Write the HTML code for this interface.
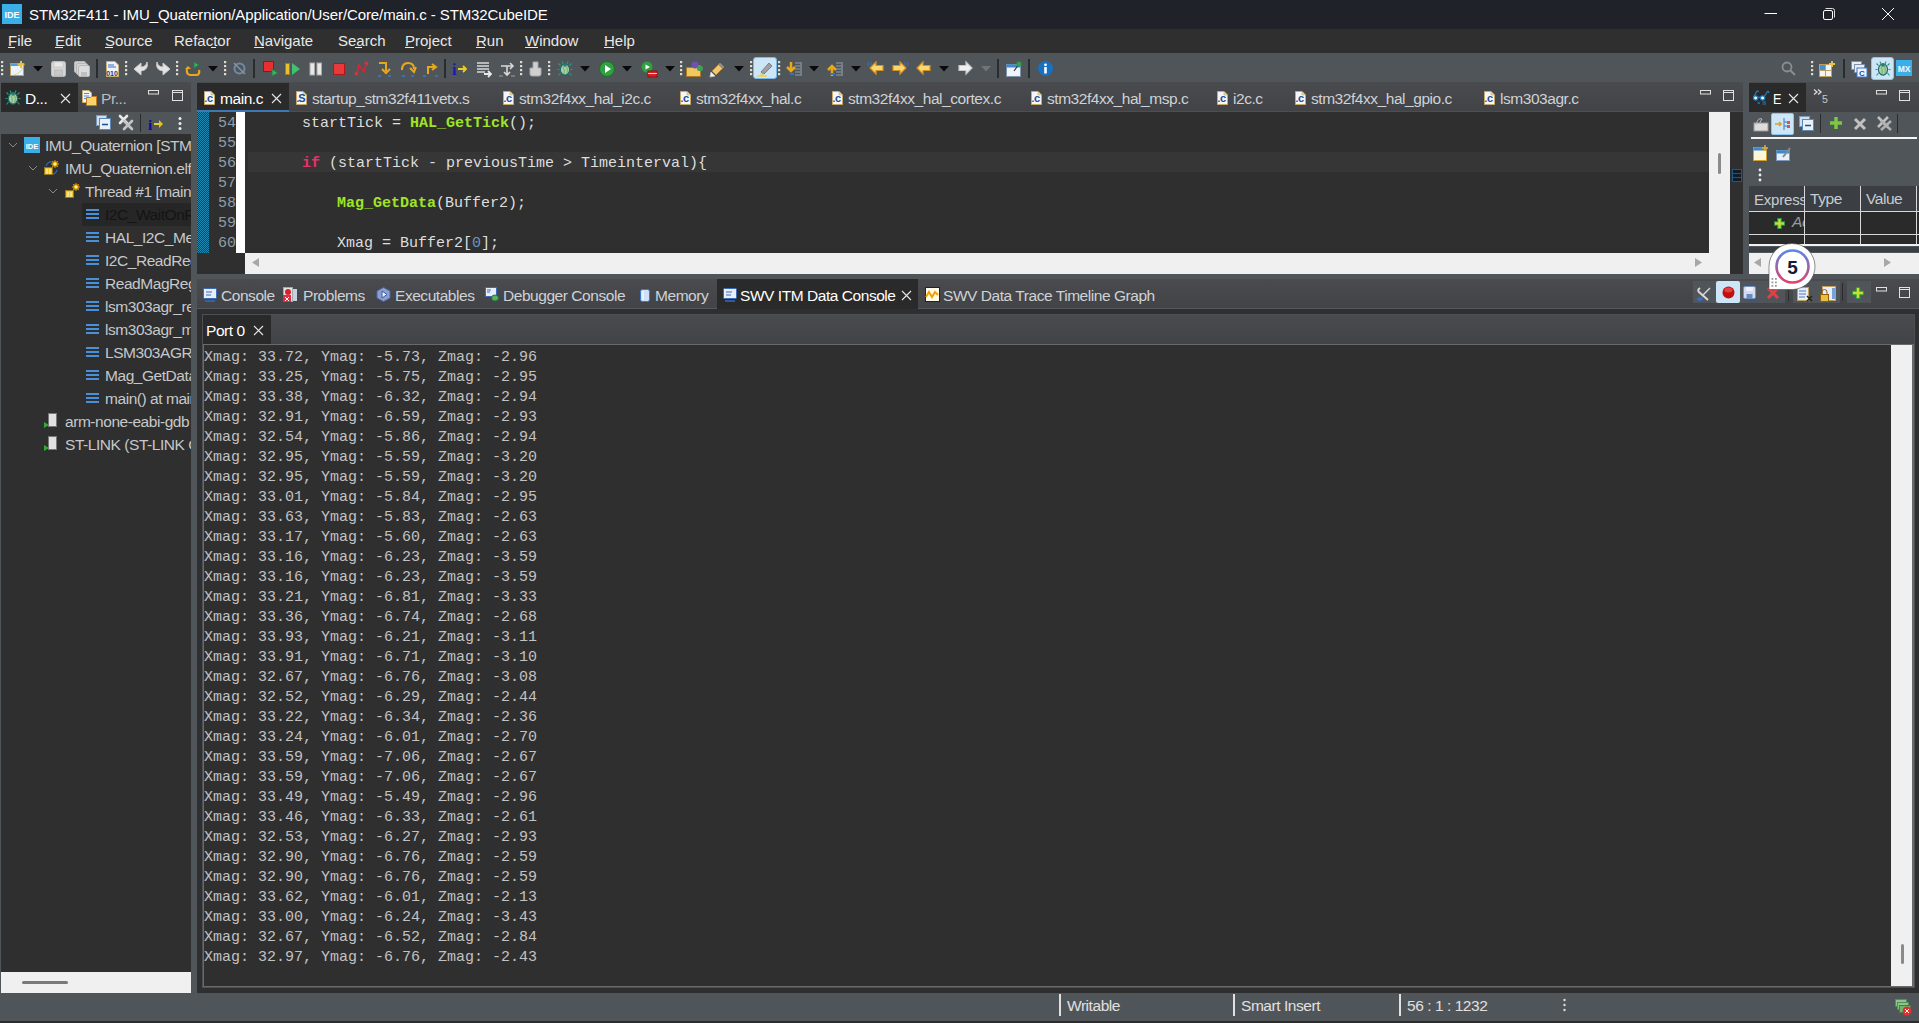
<!DOCTYPE html>
<html><head><meta charset="utf-8">
<style>
*{box-sizing:border-box}
html,body{margin:0;padding:0}
body{width:1919px;height:1023px;overflow:hidden;position:relative;background:#50555a;font-family:"Liberation Sans",sans-serif}
.a{position:absolute}
.t{white-space:pre;line-height:1.15}
svg{overflow:visible}
</style></head><body>
<div class="a" style="left:0px;top:0px;width:1919px;height:29px;background:#1f2229;"></div>
<svg class="a" style="left:2px;top:4px;" width="20" height="20" viewBox="0 0 20 20"><rect width="20" height="20" fill="#3aaee6"/><text x="10" y="14" font-family="Liberation Sans" font-weight="bold" font-size="9" fill="#fff" text-anchor="middle">IDE</text></svg>
<div class="a t" style="left:29px;top:6px;font-size:15px;color:#ffffff;font-family:'Liberation Sans',sans-serif;letter-spacing:-0.1px">STM32F411 - IMU_Quaternion/Application/User/Core/main.c - STM32CubeIDE</div>
<svg class="a" style="left:1764px;top:13px;" width="14" height="2" viewBox="0 0 14 2"><line x1="0.5" y1="0.5" x2="13" y2="0.5" stroke="#fff" stroke-width="1"/></svg>
<svg class="a" style="left:1822px;top:7px;" width="14" height="14" viewBox="0 0 14 14"><rect x="1.5" y="3.5" width="9" height="9" rx="1.5" fill="none" stroke="#fff"/><path d="M3.5 1.5H10.5Q12.5 1.5 12.5 3.5V10.5" fill="none" stroke="#ddd"/></svg>
<svg class="a" style="left:1881px;top:7px;" width="14" height="14" viewBox="0 0 14 14"><path d="M1 1L13 13M13 1L1 13" stroke="#fff" stroke-width="1"/></svg>
<div class="a" style="left:0px;top:29px;width:1919px;height:24px;background:#2f2f2f;"></div>
<div class="a t" style="left:8px;top:32px;font-size:15px;color:#e8e8e8;font-family:'Liberation Sans',sans-serif;">File</div>
<div class="a t" style="left:55px;top:32px;font-size:15px;color:#e8e8e8;font-family:'Liberation Sans',sans-serif;">Edit</div>
<div class="a t" style="left:105px;top:32px;font-size:15px;color:#e8e8e8;font-family:'Liberation Sans',sans-serif;">Source</div>
<div class="a t" style="left:174px;top:32px;font-size:15px;color:#e8e8e8;font-family:'Liberation Sans',sans-serif;">Refactor</div>
<div class="a t" style="left:254px;top:32px;font-size:15px;color:#e8e8e8;font-family:'Liberation Sans',sans-serif;">Navigate</div>
<div class="a t" style="left:338px;top:32px;font-size:15px;color:#e8e8e8;font-family:'Liberation Sans',sans-serif;">Search</div>
<div class="a t" style="left:405px;top:32px;font-size:15px;color:#e8e8e8;font-family:'Liberation Sans',sans-serif;">Project</div>
<div class="a t" style="left:476px;top:32px;font-size:15px;color:#e8e8e8;font-family:'Liberation Sans',sans-serif;">Run</div>
<div class="a t" style="left:525px;top:32px;font-size:15px;color:#e8e8e8;font-family:'Liberation Sans',sans-serif;">Window</div>
<div class="a t" style="left:604px;top:32px;font-size:15px;color:#e8e8e8;font-family:'Liberation Sans',sans-serif;">Help</div>
<div class="a" style="left:8px;top:47px;width:7px;height:1px;background:#e8e8e8;"></div>
<div class="a" style="left:55px;top:47px;width:8px;height:1px;background:#e8e8e8;"></div>
<div class="a" style="left:105px;top:47px;width:8px;height:1px;background:#e8e8e8;"></div>
<div class="a" style="left:211px;top:47px;width:5px;height:1px;background:#e8e8e8;"></div>
<div class="a" style="left:254px;top:47px;width:10px;height:1px;background:#e8e8e8;"></div>
<div class="a" style="left:355px;top:47px;width:7px;height:1px;background:#e8e8e8;"></div>
<div class="a" style="left:405px;top:47px;width:9px;height:1px;background:#e8e8e8;"></div>
<div class="a" style="left:476px;top:47px;width:9px;height:1px;background:#e8e8e8;"></div>
<div class="a" style="left:525px;top:47px;width:13px;height:1px;background:#e8e8e8;"></div>
<div class="a" style="left:604px;top:47px;width:10px;height:1px;background:#e8e8e8;"></div>
<div class="a" style="left:0px;top:53px;width:1919px;height:30px;background:#50555a;"></div>
<svg class="a" style="left:1px;top:61px;" width="3" height="15" viewBox="0 0 3 15"><rect x="0" y="0" width="2.2" height="2.2" fill="#e0dcc8"/><rect x="0" y="4" width="2.2" height="2.2" fill="#e0dcc8"/><rect x="0" y="8" width="2.2" height="2.2" fill="#e0dcc8"/><rect x="0" y="12" width="2.2" height="2.2" fill="#e0dcc8"/></svg>
<svg class="a" style="left:10px;top:61px;" width="15" height="15" viewBox="0 0 15 15"><rect x="0.5" y="2.5" width="13" height="12" fill="#eaf4fc" stroke="#c0a060"/><rect x="0.5" y="2.5" width="9" height="2.5" fill="#4aa0e0"/><path d="M11 0V7M7.5 3.5H14.5" stroke="#f0c040" stroke-width="2"/><path d="M4 14Q11 12 13 6" stroke="#e8d090" fill="none"/></svg>
<svg class="a" style="left:33px;top:66px;" width="10" height="6" viewBox="0 0 10 6"><path d="M0 0H10L5 5.5Z" fill="#0a0a0a"/></svg>
<svg class="a" style="left:51px;top:61px;" width="15" height="16" viewBox="0 0 15 16"><rect x="0.5" y="0.5" width="14" height="15" rx="2" fill="#d6d6d6" stroke="#bdbdbd"/><rect x="3" y="1" width="9" height="5" fill="#e8e8e8" stroke="#c0c0c0" stroke-width="0.6"/><rect x="3.5" y="9" width="8" height="6" fill="#c8c8c8" stroke="#b0b0b0" stroke-width="0.6"/></svg>
<svg class="a" style="left:74px;top:61px;" width="16" height="16" viewBox="0 0 16 16"><rect x="0.5" y="0.5" width="11" height="11" rx="1.5" fill="#d0d0d0" stroke="#b8b8b8"/><rect x="2.5" y="2.5" width="11" height="11" rx="1.5" fill="#d6d6d6" stroke="#b8b8b8"/><rect x="4.5" y="4.5" width="11" height="11" rx="1.5" fill="#dcdcdc" stroke="#b8b8b8"/><rect x="7" y="11" width="6" height="4" fill="#c0c0c0"/></svg>
<div class="a" style="left:96px;top:59px;width:2px;height:19px;background:#2a2c2e;"></div>
<svg class="a" style="left:106px;top:61px;" width="13" height="16" viewBox="0 0 13 16"><path d="M0.5 0.5H9L12.5 4V15.5H0.5Z" fill="#eef2fa" stroke="#c8b070"/><path d="M2 4H8M2 6H10" stroke="#3a70c0"/><text x="6" y="14.5" font-family="Liberation Sans" font-weight="bold" font-size="7" fill="#1a3a80" text-anchor="middle">010</text></svg>
<svg class="a" style="left:125px;top:61px;" width="3" height="15" viewBox="0 0 3 15"><rect x="0" y="0" width="2.2" height="2.2" fill="#e0dcc8"/><rect x="0" y="4" width="2.2" height="2.2" fill="#e0dcc8"/><rect x="0" y="8" width="2.2" height="2.2" fill="#e0dcc8"/><rect x="0" y="12" width="2.2" height="2.2" fill="#e0dcc8"/></svg>
<svg class="a" style="left:133px;top:61px;" width="16" height="16" viewBox="0 0 16 16"><path d="M14 1Q16 9 8 10V14L1 8L8 2V6Q13 6 14 1Z" fill="#e4e4e4" stroke="#c8c8c8"/></svg>
<svg class="a" style="left:155px;top:61px;" width="16" height="16" viewBox="0 0 16 16"><path d="M2 1Q0 9 8 10V14L15 8L8 2V6Q3 6 2 1Z" fill="#e4e4e4" stroke="#c8c8c8"/></svg>
<svg class="a" style="left:176px;top:61px;" width="3" height="15" viewBox="0 0 3 15"><rect x="0" y="0" width="2.2" height="2.2" fill="#e0dcc8"/><rect x="0" y="4" width="2.2" height="2.2" fill="#e0dcc8"/><rect x="0" y="8" width="2.2" height="2.2" fill="#e0dcc8"/><rect x="0" y="12" width="2.2" height="2.2" fill="#e0dcc8"/></svg>
<svg class="a" style="left:185px;top:61px;" width="16" height="16" viewBox="0 0 16 16"><path d="M2 8Q1 13 5 14H12Q15 13 14 9" stroke="#e8a818" stroke-width="2.2" fill="none"/><path d="M0 8L3 5L6 8" fill="#e8a818"/><path d="M9 1L14 4L9 7Z" fill="#40b060" stroke="#208040"/></svg>
<svg class="a" style="left:208px;top:66px;" width="10" height="6" viewBox="0 0 10 6"><path d="M0 0H10L5 5.5Z" fill="#0a0a0a"/></svg>
<svg class="a" style="left:224px;top:61px;" width="3" height="15" viewBox="0 0 3 15"><rect x="0" y="0" width="2.2" height="2.2" fill="#e0dcc8"/><rect x="0" y="4" width="2.2" height="2.2" fill="#e0dcc8"/><rect x="0" y="8" width="2.2" height="2.2" fill="#e0dcc8"/><rect x="0" y="12" width="2.2" height="2.2" fill="#e0dcc8"/></svg>
<svg class="a" style="left:233px;top:62px;" width="13" height="13" viewBox="0 0 13 13"><circle cx="6.5" cy="6.5" r="5" fill="none" stroke="#6a8ab0" stroke-width="2"/><path d="M1 1L12 12" stroke="#909090" stroke-width="1.5"/></svg>
<div class="a" style="left:253px;top:59px;width:2px;height:19px;background:#2a2c2e;"></div>
<svg class="a" style="left:263px;top:61px;" width="16" height="16" viewBox="0 0 16 16"><rect x="0.5" y="0.5" width="10" height="10" fill="#e83030" stroke="#a01010"/><path d="M9 8L15 12L9 15Z" fill="#40b060" stroke="#208040"/></svg>
<svg class="a" style="left:285px;top:62px;" width="16" height="14" viewBox="0 0 16 14"><rect x="0.5" y="1.5" width="4" height="11" fill="#e8c030" stroke="#a08010"/><path d="M7 1L15 7L7 13Z" fill="#40c070"/></svg>
<svg class="a" style="left:310px;top:62px;" width="12" height="14" viewBox="0 0 12 14"><rect x="0" y="1" width="4.5" height="12" fill="#e8e8e8" stroke="#a8a8a8"/><rect x="7" y="1" width="4.5" height="12" fill="#e8e8e8" stroke="#a8a8a8"/></svg>
<svg class="a" style="left:333px;top:63px;" width="12" height="12" viewBox="0 0 12 12"><rect x="0.5" y="0.5" width="11" height="11" fill="#e83a3a" stroke="#b01818"/></svg>
<svg class="a" style="left:354px;top:61px;" width="15" height="15" viewBox="0 0 15 15"><circle cx="2.5" cy="12.5" r="2" fill="#e03030"/><circle cx="12.5" cy="2.5" r="2" fill="#e03030"/><path d="M3 12L5 4L10 11L12 3" stroke="#d02838" stroke-width="1.6" fill="none"/></svg>
<svg class="a" style="left:377px;top:61px;" width="16" height="16" viewBox="0 0 16 16"><path d="M2 2H9V10" stroke="#e8a818" stroke-width="2" fill="none"/><path d="M5 8L9 12L13 8" stroke="#e8a818" stroke-width="2" fill="none"/><path d="M1 15H4M11 15H14" stroke="#3a78d0" stroke-width="1.5"/></svg>
<svg class="a" style="left:400px;top:61px;" width="16" height="16" viewBox="0 0 16 16"><path d="M2 9Q2 2 8 2Q14 2 14 8" stroke="#e8a818" stroke-width="2" fill="none"/><path d="M10 7L14 11L16 6" stroke="#e8a818" stroke-width="2" fill="none"/><path d="M2 15H5M11 15H14" stroke="#3a78d0" stroke-width="1.5"/></svg>
<svg class="a" style="left:423px;top:61px;" width="16" height="16" viewBox="0 0 16 16"><path d="M5 13V6H12" stroke="#e8a818" stroke-width="2" fill="none"/><path d="M9 3L13 6L9 9" stroke="#e8a818" stroke-width="2" fill="none"/><path d="M0 15H3M12 15H15" stroke="#3a78d0" stroke-width="1.5"/></svg>
<div class="a" style="left:444px;top:59px;width:2px;height:19px;background:#2a2c2e;"></div>
<svg class="a" style="left:452px;top:61px;" width="16" height="16" viewBox="0 0 16 16"><text x="0" y="14" font-family="Liberation Serif" font-weight="bold" font-size="16" fill="#1a1ab0">i</text><path d="M6 8H14M11 5L14 8L11 11" stroke="#e8d020" stroke-width="1.8" fill="none"/></svg>
<svg class="a" style="left:476px;top:61px;" width="16" height="16" viewBox="0 0 16 16"><path d="M1 2H13M1 5H13M1 8H13M1 11H9" stroke="#d8d8d8" stroke-width="1.6"/><path d="M8 13H14M12 10L15 13L12 16" stroke="#e8e8e8" stroke-width="1.8" fill="none"/></svg>
<svg class="a" style="left:499px;top:61px;" width="16" height="16" viewBox="0 0 16 16"><path d="M2 5H14M11 2L14 5L11 8" stroke="#d8d8d8" stroke-width="1.6" fill="none"/><path d="M8 5V14M5 11L8 14L11 11" stroke="#d8d8d8" stroke-width="1.6" fill="none"/><path d="M0 15H4M12 15H16" stroke="#a0a0a0"/></svg>
<svg class="a" style="left:520px;top:61px;" width="3" height="15" viewBox="0 0 3 15"><rect x="0" y="0" width="2.2" height="2.2" fill="#e0dcc8"/><rect x="0" y="4" width="2.2" height="2.2" fill="#e0dcc8"/><rect x="0" y="8" width="2.2" height="2.2" fill="#e0dcc8"/><rect x="0" y="12" width="2.2" height="2.2" fill="#e0dcc8"/></svg>
<svg class="a" style="left:528px;top:61px;" width="15" height="16" viewBox="0 0 15 16"><path d="M5 1H10V7H13V13Q13 15 11 15H4Q2 15 2 13V7H5Z" fill="#d0d0d0" stroke="#a8a8a8"/></svg>
<svg class="a" style="left:548px;top:61px;" width="3" height="15" viewBox="0 0 3 15"><rect x="0" y="0" width="2.2" height="2.2" fill="#e0dcc8"/><rect x="0" y="4" width="2.2" height="2.2" fill="#e0dcc8"/><rect x="0" y="8" width="2.2" height="2.2" fill="#e0dcc8"/><rect x="0" y="12" width="2.2" height="2.2" fill="#e0dcc8"/></svg>
<svg class="a" style="left:557px;top:61px;" width="16" height="16" viewBox="0 0 16 16"><path d="M3.5 4.5L1.5 2.5M12.5 4.5L14.5 2.5M2.5 8.5H0.5M13.5 8.5H15.5M3.5 12L1.5 14.5M12.5 12L14.5 14.5M6 3L5 0.5M10 3L11 0.5" stroke="#2a9a80" stroke-width="1.1"/><ellipse cx="8" cy="8.5" rx="4.6" ry="5.6" fill="#a8d0a0" stroke="#1e6a70" stroke-width="1.1"/><path d="M6 5.5Q8 9 7 13M9.5 5Q11 8.5 10 12.5" stroke="#6aa070" fill="none" stroke-width="0.8"/><circle cx="8" cy="4" r="1.8" fill="#2a7a70"/></svg>
<svg class="a" style="left:580px;top:66px;" width="10" height="6" viewBox="0 0 10 6"><path d="M0 0H10L5 5.5Z" fill="#0a0a0a"/></svg>
<svg class="a" style="left:599px;top:61px;" width="16" height="16" viewBox="0 0 16 16"><circle cx="8" cy="8" r="7.5" fill="#30a040" stroke="#1a7028"/><path d="M6 4L12 8L6 12Z" fill="#fff"/></svg>
<svg class="a" style="left:622px;top:66px;" width="10" height="6" viewBox="0 0 10 6"><path d="M0 0H10L5 5.5Z" fill="#0a0a0a"/></svg>
<svg class="a" style="left:641px;top:61px;" width="17" height="17" viewBox="0 0 17 17"><circle cx="6" cy="6" r="5.5" fill="#30a040"/><path d="M4.5 3.5L9 6L4.5 8.5Z" fill="#fff"/><rect x="7" y="10" width="9" height="6" fill="#d82020" stroke="#901010"/><path d="M7 12.5H16" stroke="#fff" stroke-width="0.8"/></svg>
<svg class="a" style="left:665px;top:66px;" width="10" height="6" viewBox="0 0 10 6"><path d="M0 0H10L5 5.5Z" fill="#0a0a0a"/></svg>
<svg class="a" style="left:680px;top:61px;" width="3" height="15" viewBox="0 0 3 15"><rect x="0" y="0" width="2.2" height="2.2" fill="#e0dcc8"/><rect x="0" y="4" width="2.2" height="2.2" fill="#e0dcc8"/><rect x="0" y="8" width="2.2" height="2.2" fill="#e0dcc8"/><rect x="0" y="12" width="2.2" height="2.2" fill="#e0dcc8"/></svg>
<svg class="a" style="left:686px;top:61px;" width="17" height="16" viewBox="0 0 17 16"><path d="M0.5 6.5H6L7.5 4.5H14.5V15.5H0.5Z" fill="#f0c860" stroke="#b07820"/><circle cx="9" cy="4" r="3.5" fill="#7050b0"/><rect x="11" y="5" width="6" height="5" rx="2" fill="#40a050"/></svg>
<svg class="a" style="left:709px;top:61px;" width="17" height="17" viewBox="0 0 17 17"><path d="M3 10L11 2L15 6L7 14Z" fill="#f0c870" stroke="#b08030"/><path d="M2 11L6 15L1 16Z" fill="#f8f8f8" stroke="#c0c0c0"/><path d="M10 3L14 7" stroke="#888" stroke-width="2"/></svg>
<svg class="a" style="left:734px;top:66px;" width="10" height="6" viewBox="0 0 10 6"><path d="M0 0H10L5 5.5Z" fill="#0a0a0a"/></svg>
<svg class="a" style="left:750px;top:61px;" width="3" height="15" viewBox="0 0 3 15"><rect x="0" y="0" width="2.2" height="2.2" fill="#e0dcc8"/><rect x="0" y="4" width="2.2" height="2.2" fill="#e0dcc8"/><rect x="0" y="8" width="2.2" height="2.2" fill="#e0dcc8"/><rect x="0" y="12" width="2.2" height="2.2" fill="#e0dcc8"/></svg>
<div class="a" style="left:753px;top:57px;width:24px;height:22px;background:#cde6f7;border:1px solid #7ab8ea;border-radius:3px"></div>
<svg class="a" style="left:757px;top:61px;" width="16" height="16" viewBox="0 0 16 16"><path d="M4 11L12 2L15 5L7 13Z" fill="#a0a0a0" stroke="#808080"/><path d="M3 12L7 14L4 15Z" fill="#f0d040"/><path d="M0 15H10" stroke="#f0d040" stroke-width="1.5"/></svg>
<svg class="a" style="left:778px;top:61px;" width="3" height="15" viewBox="0 0 3 15"><rect x="0" y="0" width="2.2" height="2.2" fill="#e0dcc8"/><rect x="0" y="4" width="2.2" height="2.2" fill="#e0dcc8"/><rect x="0" y="8" width="2.2" height="2.2" fill="#e0dcc8"/><rect x="0" y="12" width="2.2" height="2.2" fill="#e0dcc8"/></svg>
<svg class="a" style="left:786px;top:61px;" width="16" height="16" viewBox="0 0 16 16"><path d="M5 1V9M1 6L5 10L9 6" stroke="#e8a818" stroke-width="2.5" fill="none"/><path d="M9 2H14M9 5H14M9 8H14M9 11H14M9 14H14" stroke="#90a0b0"/><path d="M15 1V15" stroke="#a0a8b0"/><rect x="4" y="12" width="4" height="2" fill="#3a70c0"/></svg>
<svg class="a" style="left:809px;top:66px;" width="10" height="6" viewBox="0 0 10 6"><path d="M0 0H10L5 5.5Z" fill="#0a0a0a"/></svg>
<svg class="a" style="left:827px;top:61px;" width="16" height="16" viewBox="0 0 16 16"><path d="M5 15V6M1 9L5 5L9 9" stroke="#e8a818" stroke-width="2.5" fill="none"/><path d="M9 2H14M9 5H14M9 8H14M9 11H14M9 14H14" stroke="#90a0b0"/><path d="M15 1V15" stroke="#a0a8b0"/><rect x="4" y="12" width="4" height="2" fill="#3a70c0"/></svg>
<svg class="a" style="left:851px;top:66px;" width="10" height="6" viewBox="0 0 10 6"><path d="M0 0H10L5 5.5Z" fill="#0a0a0a"/></svg>
<svg class="a" style="left:868px;top:61px;" width="17" height="15" viewBox="0 0 17 15"><path d="M2 7L8 1V4.5H15V9.5H8V13Z" fill="#f8d870" stroke="#d89020" stroke-width="1.2"/><path d="M0 1V5M3 1V5" stroke="#3a70c0"/></svg>
<svg class="a" style="left:891px;top:61px;" width="17" height="15" viewBox="0 0 17 15"><path d="M15 7L9 1V4.5H2V9.5H9V13Z" fill="#f8d870" stroke="#d89020" stroke-width="1.2"/><path d="M14 1V5M17 1V5" stroke="#3a70c0"/></svg>
<svg class="a" style="left:916px;top:61px;" width="15" height="15" viewBox="0 0 15 15"><path d="M1 7L7 1V4.5H14V9.5H7V13Z" fill="#f8d870" stroke="#d89020" stroke-width="1.2"/></svg>
<svg class="a" style="left:939px;top:66px;" width="10" height="6" viewBox="0 0 10 6"><path d="M0 0H10L5 5.5Z" fill="#0a0a0a"/></svg>
<svg class="a" style="left:958px;top:61px;" width="15" height="15" viewBox="0 0 15 15"><path d="M14 7L8 1V4.5H1V9.5H8V13Z" fill="#f0f0f0" stroke="#c8c8c8" stroke-width="1.2"/></svg>
<svg class="a" style="left:981px;top:66px;" width="10" height="6" viewBox="0 0 10 6"><path d="M0 0H10L5 5.5Z" fill="#707478"/></svg>
<div class="a" style="left:997px;top:59px;width:2px;height:19px;background:#2a2c2e;"></div>
<svg class="a" style="left:1006px;top:61px;" width="16" height="16" viewBox="0 0 16 16"><rect x="0.5" y="3.5" width="14" height="12" fill="#eef4fc" stroke="#8090a8"/><rect x="0.5" y="3.5" width="14" height="3" fill="#3a8ad0"/><path d="M8 10L13 3" stroke="#404040" stroke-width="1.2"/><circle cx="13" cy="3" r="2.5" fill="#30a040"/></svg>
<div class="a" style="left:1028px;top:59px;width:2px;height:19px;background:#2a2c2e;"></div>
<svg class="a" style="left:1038px;top:61px;" width="15" height="15" viewBox="0 0 15 15"><circle cx="7.5" cy="7.5" r="7.5" fill="#1a70c0"/><rect x="6.2" y="6" width="2.6" height="6.5" fill="#fff"/><circle cx="7.5" cy="3.8" r="1.4" fill="#fff"/></svg>
<svg class="a" style="left:1781px;top:61px;" width="15" height="15" viewBox="0 0 15 15"><circle cx="6" cy="6" r="4.5" fill="none" stroke="#8a8e92" stroke-width="1.8"/><path d="M9.5 9.5L14 14" stroke="#8a8e92" stroke-width="2"/></svg>
<svg class="a" style="left:1811px;top:61px;" width="3" height="15" viewBox="0 0 3 15"><rect x="0" y="0" width="2.2" height="2.2" fill="#e0dcc8"/><rect x="0" y="4" width="2.2" height="2.2" fill="#e0dcc8"/><rect x="0" y="8" width="2.2" height="2.2" fill="#e0dcc8"/><rect x="0" y="12" width="2.2" height="2.2" fill="#e0dcc8"/></svg>
<svg class="a" style="left:1819px;top:61px;" width="16" height="16" viewBox="0 0 16 16"><rect x="0.5" y="3.5" width="12" height="12" fill="#f0f4f8" stroke="#c0a060"/><path d="M0.5 9.5H12.5M6.5 3.5V15.5" stroke="#c0a060"/><rect x="1" y="4" width="5" height="5" fill="#4a90d0"/><path d="M13 0V6M10 3H16" stroke="#f0c040" stroke-width="1.8"/></svg>
<div class="a" style="left:1843px;top:59px;width:2px;height:19px;background:#2a2c2e;"></div>
<svg class="a" style="left:1851px;top:61px;" width="16" height="16" viewBox="0 0 16 16"><rect x="0.5" y="0.5" width="10" height="8" fill="#e8eef8" stroke="#8090a8"/><rect x="3.5" y="3.5" width="10" height="8" fill="#e8eef8" stroke="#8090a8"/><rect x="6" y="7" width="10" height="9" fill="#f0f4fc" stroke="#3a78d0"/><text x="11" y="15" font-family="Liberation Sans" font-weight="bold" font-size="8" fill="#1a50a0" text-anchor="middle">C</text></svg>
<div class="a" style="left:1871px;top:57px;width:23px;height:23px;background:#cde6f7;border:1px solid #8fc3ea;border-radius:3px"></div>
<svg class="a" style="left:1875px;top:61px;" width="16" height="16" viewBox="0 0 16 16"><path d="M3.5 4.5L1.5 2.5M12.5 4.5L14.5 2.5M2.5 8.5H0.5M13.5 8.5H15.5M3.5 12L1.5 14.5M12.5 12L14.5 14.5M6 3L5 0.5M10 3L11 0.5" stroke="#2a9a80" stroke-width="1.1"/><ellipse cx="8" cy="8.5" rx="4.6" ry="5.6" fill="#a8d0a0" stroke="#1e6a70" stroke-width="1.1"/><path d="M6 5.5Q8 9 7 13M9.5 5Q11 8.5 10 12.5" stroke="#6aa070" fill="none" stroke-width="0.8"/><circle cx="8" cy="4" r="1.8" fill="#2a7a70"/></svg>
<svg class="a" style="left:1896px;top:60px;" width="16" height="16" viewBox="0 0 16 16"><rect width="16" height="16" fill="#3aaee6"/><text x="8" y="12" font-family="Liberation Sans" font-weight="bold" font-size="8.5" fill="#f4faff" text-anchor="middle">MX</text></svg>
<div class="a" style="left:1px;top:82px;width:190px;height:911px;overflow:hidden;background:#2f2f2f;">
<div class="a" style="left:0px;top:0px;width:190px;height:30px;background:linear-gradient(#494b4f,#414347);"></div>
<div class="a" style="left:0px;top:1px;width:77px;height:29px;background:#2a2a2a;"></div>
<svg class="a" style="left:4px;top:8px;" width="16" height="16" viewBox="0 0 16 16"><path d="M3.5 4.5L1.5 2.5M12.5 4.5L14.5 2.5M2.5 8.5H0.5M13.5 8.5H15.5M3.5 12L1.5 14.5M12.5 12L14.5 14.5M6 3L5 0.5M10 3L11 0.5" stroke="#2a9a80" stroke-width="1.1"/><ellipse cx="8" cy="8.5" rx="4.6" ry="5.6" fill="#a8d0a0" stroke="#1e6a70" stroke-width="1.1"/><path d="M6 5.5Q8 9 7 13M9.5 5Q11 8.5 10 12.5" stroke="#6aa070" fill="none" stroke-width="0.8"/><circle cx="8" cy="4" r="1.8" fill="#2a7a70"/></svg>
<div class="a t" style="left:24px;top:8px;font-size:15.5px;color:#ffffff;font-family:'Liberation Sans',sans-serif;letter-spacing:-0.45px;">D...</div>
<svg class="a" style="left:59px;top:11px;" width="11" height="11" viewBox="0 0 11 11"><path d="M1 1L10 10M10 1L1 10" stroke="#e8e8e8" stroke-width="1.1"/></svg>
<svg class="a" style="left:81px;top:8px;" width="16" height="16" viewBox="0 0 16 16"><path d="M0.5 0.5H7L9.5 3V12.5H0.5Z" fill="#eef2fa" stroke="#c8b070"/><path d="M2 3.5H7M2 6H7M2 8.5H6" stroke="#4a7ad8" stroke-width="0.9"/><path d="M4.5 7.5H8.5L9.5 6.5H14.5V15.5H4.5Z" fill="#fad468" stroke="#c47a20"/></svg>
<div class="a t" style="left:100px;top:8px;font-size:15.5px;color:#b9bcc0;font-family:'Liberation Sans',sans-serif;letter-spacing:-0.45px;">Pr...</div>
<svg class="a" style="left:147px;top:8px;" width="11" height="5" viewBox="0 0 11 5"><rect x="0.5" y="0.5" width="10" height="3.5" fill="none" stroke="#e0e0e0"/></svg>
<svg class="a" style="left:171px;top:8px;" width="11" height="11" viewBox="0 0 11 11"><rect x="0.5" y="0.5" width="10" height="10" fill="none" stroke="#e0e0e0"/><line x1="0.5" y1="2.5" x2="10.5" y2="2.5" stroke="#e0e0e0"/></svg>
<div class="a" style="left:0px;top:30px;width:190px;height:22px;background:#50555a;"></div>
<svg class="a" style="left:95px;top:33px;" width="15" height="15" viewBox="0 0 15 15"><rect x="0.5" y="0.5" width="10" height="10" fill="#cfdff0" stroke="#7a9ac0"/><rect x="3.5" y="3.5" width="11" height="11" fill="#e8f0fa" stroke="#5a86b8"/><line x1="6" y1="9.5" x2="12" y2="9.5" stroke="#1d4f91" stroke-width="1.5"/></svg>
<svg class="a" style="left:117px;top:32px;" width="16" height="17" viewBox="0 0 16 17"><path d="M2 2L9 9M9 2L2 9" stroke="#e8e8e8" stroke-width="2.6" stroke-linecap="round"/><path d="M6 7L14 15M14 7L6 15" stroke="#c4c4c4" stroke-width="2.6" stroke-linecap="round"/></svg>
<div class="a" style="left:139px;top:32px;width:1px;height:18px;background:#2b2b2b;"></div>
<svg class="a" style="left:147px;top:34px;" width="16" height="15" viewBox="0 0 16 15"><text x="0" y="13.5" font-family="Liberation Serif" font-weight="bold" font-size="15" fill="#0a0aa0">i</text><path d="M6 8H12" stroke="#e8d020" stroke-width="2"/><path d="M11 4L15 8L11 12Z" fill="#e8c020"/></svg>
<svg class="a" style="left:177px;top:34px;" width="4" height="15" viewBox="0 0 4 15"><circle cx="2" cy="2.5" r="1.5" fill="#eee"/><circle cx="2" cy="7.5" r="1.5" fill="#eee"/><circle cx="2" cy="12.5" r="1.5" fill="#eee"/></svg>
<svg class="a" style="left:7px;top:60px;" width="10" height="6" viewBox="0 0 10 6"><path d="M1 1L5 5L9 1" fill="none" stroke="#8a8a8a"/></svg>
<svg class="a" style="left:23px;top:55px;" width="16" height="16" viewBox="0 0 16 16"><rect width="16" height="16" fill="#3aaee6"/><text x="8" y="11.5" font-family="Liberation Sans" font-weight="bold" font-size="7.5" fill="#fff" text-anchor="middle">IDE</text></svg>
<div class="a t" style="left:44px;top:55px;font-size:15.5px;color:#c6c8ca;font-family:'Liberation Sans',sans-serif;letter-spacing:-0.45px;">IMU_Quaternion [STM32 C/C++ Application]</div>
<svg class="a" style="left:27px;top:83px;" width="10" height="6" viewBox="0 0 10 6"><path d="M1 1L5 5L9 1" fill="none" stroke="#8a8a8a"/></svg>
<svg class="a" style="left:43px;top:78px;" width="15" height="15" viewBox="0 0 15 15"><path d="M2 6Q4 1 8 2" stroke="#2a6ab0" stroke-width="1.2" fill="none"/><path d="M8 14Q12 14 13 10" stroke="#2a6ab0" stroke-width="1.2" fill="none"/><rect x="0.5" y="7.5" width="8" height="7" fill="#f0c838" stroke="#9a7a10"/><path d="M3 9V14M6 9V14" stroke="#fff6c0" stroke-width="1.2"/><circle cx="11" cy="4" r="2.6" fill="#f8c820" stroke="#c08000"/><circle cx="11" cy="4" r="0.9" fill="#fff"/><path d="M11 0V1M11 7V8M7 4H8M14 4H15M8.2 1.2L9 2M13 6L13.8 6.8M13.8 1.2L13 2M9 6L8.2 6.8" stroke="#e0a000"/></svg>
<div class="a t" style="left:64px;top:78px;font-size:15.5px;color:#c6c8ca;font-family:'Liberation Sans',sans-serif;letter-spacing:-0.45px;">IMU_Quaternion.elf</div>
<svg class="a" style="left:47px;top:106px;" width="10" height="6" viewBox="0 0 10 6"><path d="M1 1L5 5L9 1" fill="none" stroke="#8a8a8a"/></svg>
<svg class="a" style="left:64px;top:101px;" width="15" height="15" viewBox="0 0 15 15"><rect x="0.5" y="7.5" width="8" height="7" fill="#f0c838" stroke="#9a7a10"/><path d="M3 9V14M6 9V14" stroke="#fff6c0" stroke-width="1.2"/><circle cx="11" cy="4" r="2.6" fill="#f8c820" stroke="#c08000"/><circle cx="11" cy="4" r="0.9" fill="#fff"/><path d="M11 0V1M11 7V8M7 4H8M14 4H15M8.2 1.2L9 2M13 6L13.8 6.8M13.8 1.2L13 2M9 6L8.2 6.8" stroke="#e0a000"/></svg>
<div class="a t" style="left:84px;top:101px;font-size:15.5px;color:#c6c8ca;font-family:'Liberation Sans',sans-serif;letter-spacing:-0.45px;">Thread #1 [main] 1 (Suspended : Signal : SIGINT)</div>
<div class="a" style="left:81px;top:121px;width:109px;height:23px;background:#262626;"></div>
<svg class="a" style="left:85px;top:126px;" width="13" height="12" viewBox="0 0 13 12"><rect x="0" y="1" width="13" height="2" fill="#4a90d9"/><rect x="0" y="5" width="13" height="2" fill="#4a90d9"/><rect x="0" y="9" width="13" height="2" fill="#4a90d9"/></svg>
<div class="a t" style="left:104px;top:124px;font-size:15.5px;color:#141414;font-family:'Liberation Sans',sans-serif;letter-spacing:-0.45px;">I2C_WaitOnRXNEFlag</div>
<svg class="a" style="left:85px;top:149px;" width="13" height="12" viewBox="0 0 13 12"><rect x="0" y="1" width="13" height="2" fill="#4a90d9"/><rect x="0" y="5" width="13" height="2" fill="#4a90d9"/><rect x="0" y="9" width="13" height="2" fill="#4a90d9"/></svg>
<div class="a t" style="left:104px;top:147px;font-size:15.5px;color:#c6c8ca;font-family:'Liberation Sans',sans-serif;letter-spacing:-0.45px;">HAL_I2C_Mem_Read()</div>
<svg class="a" style="left:85px;top:172px;" width="13" height="12" viewBox="0 0 13 12"><rect x="0" y="1" width="13" height="2" fill="#4a90d9"/><rect x="0" y="5" width="13" height="2" fill="#4a90d9"/><rect x="0" y="9" width="13" height="2" fill="#4a90d9"/></svg>
<div class="a t" style="left:104px;top:170px;font-size:15.5px;color:#c6c8ca;font-family:'Liberation Sans',sans-serif;letter-spacing:-0.45px;">I2C_ReadRegister()</div>
<svg class="a" style="left:85px;top:195px;" width="13" height="12" viewBox="0 0 13 12"><rect x="0" y="1" width="13" height="2" fill="#4a90d9"/><rect x="0" y="5" width="13" height="2" fill="#4a90d9"/><rect x="0" y="9" width="13" height="2" fill="#4a90d9"/></svg>
<div class="a t" style="left:104px;top:193px;font-size:15.5px;color:#c6c8ca;font-family:'Liberation Sans',sans-serif;letter-spacing:-0.45px;">ReadMagRegister()</div>
<svg class="a" style="left:85px;top:218px;" width="13" height="12" viewBox="0 0 13 12"><rect x="0" y="1" width="13" height="2" fill="#4a90d9"/><rect x="0" y="5" width="13" height="2" fill="#4a90d9"/><rect x="0" y="9" width="13" height="2" fill="#4a90d9"/></svg>
<div class="a t" style="left:104px;top:216px;font-size:15.5px;color:#c6c8ca;font-family:'Liberation Sans',sans-serif;letter-spacing:-0.45px;">lsm303agr_read_reg()</div>
<svg class="a" style="left:85px;top:241px;" width="13" height="12" viewBox="0 0 13 12"><rect x="0" y="1" width="13" height="2" fill="#4a90d9"/><rect x="0" y="5" width="13" height="2" fill="#4a90d9"/><rect x="0" y="9" width="13" height="2" fill="#4a90d9"/></svg>
<div class="a t" style="left:104px;top:239px;font-size:15.5px;color:#c6c8ca;font-family:'Liberation Sans',sans-serif;letter-spacing:-0.45px;">lsm303agr_magnetic()</div>
<svg class="a" style="left:85px;top:264px;" width="13" height="12" viewBox="0 0 13 12"><rect x="0" y="1" width="13" height="2" fill="#4a90d9"/><rect x="0" y="5" width="13" height="2" fill="#4a90d9"/><rect x="0" y="9" width="13" height="2" fill="#4a90d9"/></svg>
<div class="a t" style="left:104px;top:262px;font-size:15.5px;color:#c6c8ca;font-family:'Liberation Sans',sans-serif;letter-spacing:-0.45px;">LSM303AGR_MAG_Get</div>
<svg class="a" style="left:85px;top:287px;" width="13" height="12" viewBox="0 0 13 12"><rect x="0" y="1" width="13" height="2" fill="#4a90d9"/><rect x="0" y="5" width="13" height="2" fill="#4a90d9"/><rect x="0" y="9" width="13" height="2" fill="#4a90d9"/></svg>
<div class="a t" style="left:104px;top:285px;font-size:15.5px;color:#c6c8ca;font-family:'Liberation Sans',sans-serif;letter-spacing:-0.45px;">Mag_GetData() at</div>
<svg class="a" style="left:85px;top:310px;" width="13" height="12" viewBox="0 0 13 12"><rect x="0" y="1" width="13" height="2" fill="#4a90d9"/><rect x="0" y="5" width="13" height="2" fill="#4a90d9"/><rect x="0" y="9" width="13" height="2" fill="#4a90d9"/></svg>
<div class="a t" style="left:104px;top:308px;font-size:15.5px;color:#c6c8ca;font-family:'Liberation Sans',sans-serif;letter-spacing:-0.45px;">main() at main.c:56</div>
<svg class="a" style="left:43px;top:331px;" width="15" height="16" viewBox="0 0 15 16"><rect x="4.5" y="0.5" width="8" height="13" fill="#e0e0e0" stroke="#777"/><path d="M0 9L5 12L0 15Z" fill="#3a3"/></svg>
<div class="a t" style="left:64px;top:331px;font-size:15.5px;color:#c6c8ca;font-family:'Liberation Sans',sans-serif;letter-spacing:-0.45px;">arm-none-eabi-gdb (12.1)</div>
<svg class="a" style="left:43px;top:354px;" width="15" height="16" viewBox="0 0 15 16"><rect x="4.5" y="0.5" width="8" height="13" fill="#e0e0e0" stroke="#777"/><path d="M0 9L5 12L0 15Z" fill="#3a3"/></svg>
<div class="a t" style="left:64px;top:354px;font-size:15.5px;color:#c6c8ca;font-family:'Liberation Sans',sans-serif;letter-spacing:-0.45px;">ST-LINK (ST-LINK GDB server)</div>
<div class="a" style="left:0px;top:890px;width:190px;height:21px;background:#f0f0f0;"></div>
<div class="a" style="left:21px;top:899px;width:46px;height:3px;background:#7a7a7a;border-radius:2px"></div>
</div>
<div class="a" style="left:197px;top:82px;width:1546px;height:192px;overflow:hidden;background:#2f2f2f;">
<div class="a" style="left:0px;top:0px;width:1546px;height:29px;background:linear-gradient(#494b4f,#414347);"></div>
<div class="a" style="left:0px;top:29px;width:1546px;height:1px;background:#4b4e52;"></div>
<div class="a" style="left:0px;top:1px;width:92px;height:29px;background:#2a2a2a;"></div>
<div class="a" style="left:0px;top:28px;width:92px;height:2px;background:#3d78b2;"></div>
<svg class="a" style="left:7px;top:9px;" width="11" height="14" viewBox="0 0 11 14"><path d="M0.5 0.5H7L10.5 4V13.5H0.5Z" fill="#f4f6fb" stroke="#c8a868"/><path d="M7 0.5V4H10.5" fill="#e8d8a8" stroke="#c8a868" stroke-width="0.6"/><text x="6" y="11" font-family="Liberation Sans" font-weight="bold" font-size="11" fill="#1d4f91" text-anchor="middle">c</text><rect x="1.3" y="9.5" width="1.4" height="1.5" fill="#1d4f91"/></svg>
<div class="a t" style="left:23px;top:8px;font-size:15.5px;color:#ffffff;font-family:'Liberation Sans',sans-serif;letter-spacing:-0.45px;">main.c</div>
<svg class="a" style="left:99px;top:9px;" width="11" height="14" viewBox="0 0 11 14"><path d="M0.5 0.5H7L10.5 4V13.5H0.5Z" fill="#f4f6fb" stroke="#c8a868"/><path d="M7 0.5V4H10.5" fill="#e8d8a8" stroke="#c8a868" stroke-width="0.6"/><text x="6" y="11" font-family="Liberation Sans" font-weight="bold" font-size="11" fill="#1d4f91" text-anchor="middle">S</text><rect x="1.3" y="9.5" width="1.4" height="1.5" fill="#1d4f91"/></svg>
<div class="a t" style="left:115px;top:8px;font-size:15.5px;color:#cfd2d5;font-family:'Liberation Sans',sans-serif;letter-spacing:-0.45px;">startup_stm32f411vetx.s</div>
<svg class="a" style="left:306px;top:9px;" width="11" height="14" viewBox="0 0 11 14"><path d="M0.5 0.5H7L10.5 4V13.5H0.5Z" fill="#f4f6fb" stroke="#c8a868"/><path d="M7 0.5V4H10.5" fill="#e8d8a8" stroke="#c8a868" stroke-width="0.6"/><text x="6" y="11" font-family="Liberation Sans" font-weight="bold" font-size="11" fill="#1d4f91" text-anchor="middle">c</text><rect x="1.3" y="9.5" width="1.4" height="1.5" fill="#1d4f91"/></svg>
<div class="a t" style="left:322px;top:8px;font-size:15.5px;color:#cfd2d5;font-family:'Liberation Sans',sans-serif;letter-spacing:-0.45px;">stm32f4xx_hal_i2c.c</div>
<svg class="a" style="left:483px;top:9px;" width="11" height="14" viewBox="0 0 11 14"><path d="M0.5 0.5H7L10.5 4V13.5H0.5Z" fill="#f4f6fb" stroke="#c8a868"/><path d="M7 0.5V4H10.5" fill="#e8d8a8" stroke="#c8a868" stroke-width="0.6"/><text x="6" y="11" font-family="Liberation Sans" font-weight="bold" font-size="11" fill="#1d4f91" text-anchor="middle">c</text><rect x="1.3" y="9.5" width="1.4" height="1.5" fill="#1d4f91"/></svg>
<div class="a t" style="left:499px;top:8px;font-size:15.5px;color:#cfd2d5;font-family:'Liberation Sans',sans-serif;letter-spacing:-0.45px;">stm32f4xx_hal.c</div>
<svg class="a" style="left:635px;top:9px;" width="11" height="14" viewBox="0 0 11 14"><path d="M0.5 0.5H7L10.5 4V13.5H0.5Z" fill="#f4f6fb" stroke="#c8a868"/><path d="M7 0.5V4H10.5" fill="#e8d8a8" stroke="#c8a868" stroke-width="0.6"/><text x="6" y="11" font-family="Liberation Sans" font-weight="bold" font-size="11" fill="#1d4f91" text-anchor="middle">c</text><rect x="1.3" y="9.5" width="1.4" height="1.5" fill="#1d4f91"/></svg>
<div class="a t" style="left:651px;top:8px;font-size:15.5px;color:#cfd2d5;font-family:'Liberation Sans',sans-serif;letter-spacing:-0.45px;">stm32f4xx_hal_cortex.c</div>
<svg class="a" style="left:834px;top:9px;" width="11" height="14" viewBox="0 0 11 14"><path d="M0.5 0.5H7L10.5 4V13.5H0.5Z" fill="#f4f6fb" stroke="#c8a868"/><path d="M7 0.5V4H10.5" fill="#e8d8a8" stroke="#c8a868" stroke-width="0.6"/><text x="6" y="11" font-family="Liberation Sans" font-weight="bold" font-size="11" fill="#1d4f91" text-anchor="middle">c</text><rect x="1.3" y="9.5" width="1.4" height="1.5" fill="#1d4f91"/></svg>
<div class="a t" style="left:850px;top:8px;font-size:15.5px;color:#cfd2d5;font-family:'Liberation Sans',sans-serif;letter-spacing:-0.45px;">stm32f4xx_hal_msp.c</div>
<svg class="a" style="left:1020px;top:9px;" width="11" height="14" viewBox="0 0 11 14"><path d="M0.5 0.5H7L10.5 4V13.5H0.5Z" fill="#f4f6fb" stroke="#c8a868"/><path d="M7 0.5V4H10.5" fill="#e8d8a8" stroke="#c8a868" stroke-width="0.6"/><text x="6" y="11" font-family="Liberation Sans" font-weight="bold" font-size="11" fill="#1d4f91" text-anchor="middle">c</text><rect x="1.3" y="9.5" width="1.4" height="1.5" fill="#1d4f91"/></svg>
<div class="a t" style="left:1036px;top:8px;font-size:15.5px;color:#cfd2d5;font-family:'Liberation Sans',sans-serif;letter-spacing:-0.45px;">i2c.c</div>
<svg class="a" style="left:1098px;top:9px;" width="11" height="14" viewBox="0 0 11 14"><path d="M0.5 0.5H7L10.5 4V13.5H0.5Z" fill="#f4f6fb" stroke="#c8a868"/><path d="M7 0.5V4H10.5" fill="#e8d8a8" stroke="#c8a868" stroke-width="0.6"/><text x="6" y="11" font-family="Liberation Sans" font-weight="bold" font-size="11" fill="#1d4f91" text-anchor="middle">c</text><rect x="1.3" y="9.5" width="1.4" height="1.5" fill="#1d4f91"/></svg>
<div class="a t" style="left:1114px;top:8px;font-size:15.5px;color:#cfd2d5;font-family:'Liberation Sans',sans-serif;letter-spacing:-0.45px;">stm32f4xx_hal_gpio.c</div>
<svg class="a" style="left:1287px;top:9px;" width="11" height="14" viewBox="0 0 11 14"><path d="M0.5 0.5H7L10.5 4V13.5H0.5Z" fill="#f4f6fb" stroke="#c8a868"/><path d="M7 0.5V4H10.5" fill="#e8d8a8" stroke="#c8a868" stroke-width="0.6"/><text x="6" y="11" font-family="Liberation Sans" font-weight="bold" font-size="11" fill="#1d4f91" text-anchor="middle">c</text><rect x="1.3" y="9.5" width="1.4" height="1.5" fill="#1d4f91"/></svg>
<div class="a t" style="left:1303px;top:8px;font-size:15.5px;color:#cfd2d5;font-family:'Liberation Sans',sans-serif;letter-spacing:-0.45px;">lsm303agr.c</div>
<svg class="a" style="left:74px;top:11px;" width="11" height="11" viewBox="0 0 11 11"><path d="M1 1L10 10M10 1L1 10" stroke="#e8e8e8" stroke-width="1.1"/></svg>
<svg class="a" style="left:1503px;top:8px;" width="11" height="5" viewBox="0 0 11 5"><rect x="0.5" y="0.5" width="10" height="3.5" fill="none" stroke="#e0e0e0"/></svg>
<svg class="a" style="left:1526px;top:8px;" width="11" height="11" viewBox="0 0 11 11"><rect x="0.5" y="0.5" width="10" height="10" fill="none" stroke="#e0e0e0"/><line x1="0.5" y1="2.5" x2="10.5" y2="2.5" stroke="#e0e0e0"/></svg>
<div class="a" style="left:0px;top:30px;width:12px;height:141px;background:#2f2f2f;background-image:repeating-conic-gradient(#1d88b0 0 25%,#2a3a40 0 50%);background-size:2px 2px"></div>
<div class="a t" style="left:21px;top:32px;font-size:15px;color:#8e9eab;font-family:'Liberation Mono',monospace;line-height:20px">54</div>
<div class="a t" style="left:21px;top:52px;font-size:15px;color:#8e9eab;font-family:'Liberation Mono',monospace;line-height:20px">55</div>
<div class="a t" style="left:21px;top:72px;font-size:15px;color:#8e9eab;font-family:'Liberation Mono',monospace;line-height:20px">56</div>
<div class="a t" style="left:21px;top:92px;font-size:15px;color:#8e9eab;font-family:'Liberation Mono',monospace;line-height:20px">57</div>
<div class="a t" style="left:21px;top:112px;font-size:15px;color:#8e9eab;font-family:'Liberation Mono',monospace;line-height:20px">58</div>
<div class="a t" style="left:21px;top:132px;font-size:15px;color:#8e9eab;font-family:'Liberation Mono',monospace;line-height:20px">59</div>
<div class="a t" style="left:21px;top:152px;font-size:15px;color:#8e9eab;font-family:'Liberation Mono',monospace;line-height:20px">60</div>
<div class="a" style="left:39px;top:30px;width:9px;height:141px;background:#ffffff;"></div>
<div class="a" style="left:51px;top:70px;width:1461px;height:20px;background:#363636;"></div>
<div class="a t" style="left:105px;top:32px;font-size:15px;color:#dedede;font-family:'Liberation Mono',monospace;line-height:20px">startTick = <b style="color:#a0e426">HAL_GetTick</b>();</div>
<div class="a t" style="left:105px;top:72px;font-size:15px;color:#dedede;font-family:'Liberation Mono',monospace;line-height:20px"><b style="color:#e8306e">if</b> (startTick - previousTime &gt; Timeinterval){</div>
<div class="a" style="left:140px;top:111px;width:0px;height:0px;background:#000;"></div>
<div class="a t" style="left:140px;top:112px;font-size:15px;color:#dedede;font-family:'Liberation Mono',monospace;line-height:20px"><b style="color:#a0e426">Mag_GetData</b>(Buffer2);</div>
<div class="a t" style="left:140px;top:152px;font-size:15px;color:#dedede;font-family:'Liberation Mono',monospace;line-height:20px">Xmag = Buffer2[<span style="color:#6c94c0">0</span>];</div>
<div class="a" style="left:48px;top:171px;width:1464px;height:21px;background:#f0f0f0;"></div>
<div class="a" style="left:1512px;top:30px;width:21px;height:162px;background:#f0f0f0;"></div>
<div class="a" style="left:1521px;top:71px;width:3px;height:21px;background:#8a8a8a;border-radius:2px"></div>
<svg class="a" style="left:1498px;top:176px;" width="8" height="9" viewBox="0 0 8 9"><path d="M0 0L7 4.5L0 9Z" fill="#a8a8a8"/></svg>
<svg class="a" style="left:55px;top:176px;" width="8" height="9" viewBox="0 0 8 9"><path d="M7 0L0 4.5L7 9Z" fill="#a8a8a8"/></svg>
<svg class="a" style="left:1535px;top:87px;" width="10" height="13" viewBox="0 0 10 13"><rect x="0.5" y="0.5" width="9" height="12" fill="#0d1b2a" stroke="#1a5a8a"/><line x1="0" y1="4.5" x2="10" y2="4.5" stroke="#1a5a8a"/><line x1="0" y1="8.5" x2="10" y2="8.5" stroke="#1a5a8a"/></svg>
</div>
<div class="a" style="left:1749px;top:82px;width:170px;height:192px;overflow:hidden;background:#50555a;">
<div class="a" style="left:0px;top:0px;width:170px;height:30px;background:linear-gradient(#494b4f,#414347);"></div>
<div class="a" style="left:0px;top:1px;width:57px;height:29px;background:#2a2a2a;"></div>
<svg class="a" style="left:3px;top:7px;" width="17" height="16" viewBox="0 0 17 16"><path d="M1.5 8L5 2.2Q6 1.3 6.5 3" stroke="#1a80c8" stroke-width="1.2" fill="none"/><path d="M12 8L15.5 2.5Q16.5 1.8 17 4" stroke="#1a80c8" stroke-width="1.2" fill="none"/><circle cx="3.6" cy="9" r="2.1" fill="#fff" stroke="#1a80c8" stroke-width="1.3"/><circle cx="10.6" cy="9" r="2.1" fill="#fff" stroke="#1a80c8" stroke-width="1.3"/><path d="M5.8 8.3H8.4" stroke="#1a80c8" stroke-width="1.2"/><path d="M5.5 12.5L8 15M8 12.5L5.5 15" stroke="#1a80c8" stroke-width="0.9"/><path d="M10.5 13H14M10.5 15H14" stroke="#1a80c8" stroke-width="1"/></svg>
<div class="a t" style="left:24px;top:8px;font-size:15px;color:#ffffff;font-family:'Liberation Sans',sans-serif;transform:scaleX(0.85);transform-origin:0 0">E</div>
<svg class="a" style="left:39px;top:11px;" width="11" height="11" viewBox="0 0 11 11"><path d="M1 1L10 10M10 1L1 10" stroke="#e8e8e8" stroke-width="1.1"/></svg>
<svg class="a" style="left:64px;top:6px;" width="16" height="18" viewBox="0 0 16 18"><path d="M1 1.5L4 4L1 6.5M5 1.5L8 4L5 6.5" stroke="#dcdcdc" stroke-width="1.3" fill="none"/><text x="9" y="15" font-family="Liberation Sans" font-size="10.5" fill="#c8c8c8">5</text></svg>
<svg class="a" style="left:127px;top:8px;" width="11" height="5" viewBox="0 0 11 5"><rect x="0.5" y="0.5" width="10" height="3.5" fill="none" stroke="#e0e0e0"/></svg>
<svg class="a" style="left:150px;top:8px;" width="11" height="11" viewBox="0 0 11 11"><rect x="0.5" y="0.5" width="10" height="10" fill="none" stroke="#e0e0e0"/><line x1="0.5" y1="2.5" x2="10.5" y2="2.5" stroke="#e0e0e0"/></svg>
<div class="a" style="left:0px;top:30px;width:170px;height:26px;background:#50555a;"></div>
<svg class="a" style="left:4px;top:34px;" width="16" height="16" viewBox="0 0 16 16"><rect x="1" y="7" width="14" height="8" fill="#ddd" stroke="#999"/><path d="M3 9Q5 1 9 3L6 8" stroke="#bbb" fill="none"/></svg>
<div class="a" style="left:22px;top:31px;width:23px;height:22px;background:#cde6f7;border:1px solid #8fc3ea;border-radius:2px"></div>
<svg class="a" style="left:25px;top:34px;" width="17" height="16" viewBox="0 0 17 16"><path d="M1 8H7M5 6L7 8L5 10" stroke="#e0a020" stroke-width="1.6" fill="none"/><path d="M10 2V14M10 6H14M10 10H14" stroke="#3a7ac0"/><rect x="13" y="5" width="3" height="3" fill="#e05050"/><rect x="13" y="9" width="3" height="3" fill="#e05050"/></svg>
<svg class="a" style="left:50px;top:34px;" width="15" height="15" viewBox="0 0 15 15"><rect x="0.5" y="0.5" width="10" height="10" fill="#cfdff0" stroke="#7a9ac0"/><rect x="3.5" y="3.5" width="11" height="11" fill="#e8f0fa" stroke="#5a86b8"/><line x1="6" y1="9.5" x2="12" y2="9.5" stroke="#1d4f91" stroke-width="1.5"/></svg>
<div class="a" style="left:71px;top:32px;width:1px;height:19px;background:#2b2b2b;"></div>
<svg class="a" style="left:80px;top:34px;" width="14" height="14" viewBox="0 0 14 14"><path d="M7 1V13M1 7H13" stroke="#7ac943" stroke-width="3.5"/></svg>
<svg class="a" style="left:104px;top:35px;" width="14" height="14" viewBox="0 0 14 14"><path d="M2 2L12 12M12 2L2 12" stroke="#c0c0c0" stroke-width="3"/></svg>
<svg class="a" style="left:127px;top:33px;" width="16" height="16" viewBox="0 0 16 16"><path d="M2 2L12 12M12 2L2 12" stroke="#c0c0c0" stroke-width="2.6"/><path d="M5 6L15 15M15 6L5 15" stroke="#b0b0b0" stroke-width="2.6"/></svg>
<div class="a" style="left:148px;top:32px;width:1px;height:19px;background:#2b2b2b;"></div>
<div class="a" style="left:2px;top:55px;width:166px;height:2px;background:#f4f4f4;"></div>
<svg class="a" style="left:4px;top:63px;" width="16" height="17" viewBox="0 0 16 17"><rect x="0.5" y="2.5" width="13" height="13" fill="#fdf6d8" stroke="#d0a030"/><rect x="0.5" y="2.5" width="13" height="3" fill="#3a8ad0"/><path d="M12 0V6M9 3H15" stroke="#e0b030" stroke-width="1.5"/></svg>
<svg class="a" style="left:27px;top:64px;" width="16" height="15" viewBox="0 0 16 15"><rect x="0.5" y="4.5" width="13" height="10" fill="#e8f0fa" stroke="#7a9ac0"/><rect x="0.5" y="4.5" width="13" height="3" fill="#3a8ad0"/><path d="M7 11L14 2" stroke="#888" stroke-width="2"/></svg>
<svg class="a" style="left:9px;top:86px;" width="4" height="15" viewBox="0 0 4 15"><circle cx="2" cy="2" r="1.4" fill="#eee"/><circle cx="2" cy="7" r="1.4" fill="#eee"/><circle cx="2" cy="12" r="1.4" fill="#eee"/></svg>
<div class="a" style="left:0px;top:104px;width:170px;height:26px;background:#3b3f43;"></div>
<div class="a" style="left:0px;top:104px;width:55px;height:26px;overflow:hidden;">
<div class="a t" style="left:5px;top:5px;font-size:15px;color:#c8ccd0;font-family:'Liberation Sans',sans-serif;letter-spacing:-0.2px">Expression</div>
</div>
<div class="a t" style="left:61px;top:108px;font-size:15.5px;color:#c8ccd0;font-family:'Liberation Sans',sans-serif;letter-spacing:-0.45px;">Type</div>
<div class="a t" style="left:117px;top:108px;font-size:15.5px;color:#c8ccd0;font-family:'Liberation Sans',sans-serif;letter-spacing:-0.45px;">Value</div>
<div class="a" style="left:0px;top:130px;width:170px;height:33px;background:#2a2a2a;"></div>
<div class="a" style="left:0px;top:129px;width:170px;height:1px;background:#d8d8d8;"></div>
<div class="a" style="left:0px;top:152px;width:170px;height:1px;background:#d8d8d8;"></div>
<div class="a" style="left:55px;top:104px;width:1px;height:59px;background:#d8d8d8;"></div>
<div class="a" style="left:111px;top:104px;width:1px;height:59px;background:#d8d8d8;"></div>
<div class="a" style="left:167px;top:104px;width:1px;height:59px;background:#d8d8d8;"></div>
<svg class="a" style="left:24px;top:135px;" width="13" height="13" viewBox="0 0 13 13"><path d="M6.5 1V12M1 6.5H12" stroke="#2a9a40" stroke-width="4.5"/><path d="M6.5 2V11M2 6.5H11" stroke="#b8e040" stroke-width="2.5"/></svg>
<div class="a" style="left:0px;top:130px;width:55px;height:22px;overflow:hidden;">
<div class="a t" style="left:43px;top:1px;font-size:15.5px;color:#9a9a9a;font-family:'Liberation Sans',sans-serif;letter-spacing:-0.45px;font-style:italic">Add new expression</div>
</div>
<div class="a" style="left:0px;top:162px;width:170px;height:2px;background:#f0f0f0;"></div>
<div class="a" style="left:0px;top:165px;width:170px;height:5px;background:#3b3f43;"></div>
<div class="a" style="left:0px;top:171px;width:170px;height:21px;background:#f0f0f0;"></div>
<svg class="a" style="left:5px;top:176px;" width="8" height="9" viewBox="0 0 8 9"><path d="M7 0L0 4.5L7 9Z" fill="#a8a8a8"/></svg>
<svg class="a" style="left:135px;top:176px;" width="8" height="9" viewBox="0 0 8 9"><path d="M0 0L7 4.5L0 9Z" fill="#a8a8a8"/></svg>
</div>
<div class="a" style="left:197px;top:279px;width:1722px;height:714px;overflow:hidden;background:#2f2f2f;">
<div class="a" style="left:0px;top:0px;width:1722px;height:30px;background:linear-gradient(#494b4f,#414347);"></div>
<div class="a" style="left:0px;top:29px;width:1722px;height:1px;background:#55585c;"></div>
<div class="a" style="left:520px;top:0px;width:201px;height:30px;background:#2a2a2a;"></div>
<svg class="a" style="left:6px;top:9px;" width="14" height="14" viewBox="0 0 14 14"><rect x="0.5" y="0.5" width="13" height="10" rx="1" fill="#e8eef8" stroke="#3a6ab8"/><path d="M3 4H9M3 7H8" stroke="#3a6ab8"/><path d="M2 13H12" stroke="#3a6ab8" stroke-width="1.5"/></svg>
<div class="a t" style="left:24px;top:8px;font-size:15.5px;color:#cfd2d5;font-family:'Liberation Sans',sans-serif;letter-spacing:-0.45px;">Console</div>
<svg class="a" style="left:86px;top:8px;" width="15" height="15" viewBox="0 0 15 15"><rect x="0.5" y="0.5" width="9" height="14" fill="#e0e4ec" stroke="#a0a8b0"/><circle cx="5" cy="5" r="3" fill="#e02020"/><rect x="0" y="8" width="8" height="7" fill="#e03040"/><path d="M2 10L6 14M6 10L2 14" stroke="#fff"/><rect x="10" y="2" width="4" height="12" fill="#c8d0e0"/></svg>
<div class="a t" style="left:106px;top:8px;font-size:15.5px;color:#cfd2d5;font-family:'Liberation Sans',sans-serif;letter-spacing:-0.45px;">Problems</div>
<svg class="a" style="left:179px;top:8px;" width="15" height="15" viewBox="0 0 15 15"><polygon points="7.5,0.5 14,4 14,11 7.5,14.5 1,11 1,4" fill="#8aa0d0" stroke="#4a68a8"/><path d="M6 4L11 7.5L6 11Z" fill="#f0f4fc" stroke="#3a58a0"/></svg>
<div class="a t" style="left:198px;top:8px;font-size:15.5px;color:#cfd2d5;font-family:'Liberation Sans',sans-serif;letter-spacing:-0.45px;">Executables</div>
<svg class="a" style="left:288px;top:8px;" width="15" height="15" viewBox="0 0 15 15"><rect x="0.5" y="0.5" width="11" height="9" fill="#e8eef8" stroke="#3a6ab8"/><path d="M2 3H6M2 5H5" stroke="#3a6ab8"/><ellipse cx="10" cy="11" rx="3.5" ry="3" fill="#5ab060" stroke="#2a7040"/></svg>
<div class="a t" style="left:306px;top:8px;font-size:15.5px;color:#cfd2d5;font-family:'Liberation Sans',sans-serif;letter-spacing:-0.45px;">Debugger Console</div>
<svg class="a" style="left:443px;top:9px;" width="10" height="14" viewBox="0 0 10 14"><rect x="0.5" y="1.5" width="9" height="12" rx="2" fill="#cfe0f8" stroke="#3a78d0"/><path d="M3 3V12" stroke="#fff"/></svg>
<div class="a t" style="left:458px;top:8px;font-size:15.5px;color:#cfd2d5;font-family:'Liberation Sans',sans-serif;letter-spacing:-0.45px;">Memory</div>
<svg class="a" style="left:526px;top:9px;" width="14" height="14" viewBox="0 0 14 14"><rect x="0.5" y="0.5" width="13" height="10" rx="1" fill="#e8eef8" stroke="#3a6ab8"/><path d="M3 4H9M3 7H8" stroke="#3a6ab8"/><path d="M2 13H12" stroke="#3a6ab8" stroke-width="1.5"/></svg>
<div class="a t" style="left:543px;top:8px;font-size:15.5px;color:#ffffff;font-family:'Liberation Sans',sans-serif;letter-spacing:-0.45px;">SWV ITM Data Console</div>
<svg class="a" style="left:704px;top:11px;" width="11" height="11" viewBox="0 0 11 11"><path d="M1 1L10 10M10 1L1 10" stroke="#e8e8e8" stroke-width="1.1"/></svg>
<svg class="a" style="left:728px;top:8px;" width="15" height="15" viewBox="0 0 15 15"><rect x="0.5" y="0.5" width="14" height="14" fill="#fffbe8" stroke="#222"/><path d="M1 10L4 5L7 10L10 5L13 8" fill="none" stroke="#f0a000" stroke-width="2"/></svg>
<div class="a t" style="left:746px;top:8px;font-size:15.5px;color:#cfd2d5;font-family:'Liberation Sans',sans-serif;letter-spacing:-0.45px;">SWV Data Trace Timeline Graph</div>
<div class="a" style="left:1496px;top:2px;width:92px;height:22px;background:#50555a;"></div>
<div class="a" style="left:1596px;top:2px;width:47px;height:22px;background:#50555a;"></div>
<div class="a" style="left:1650px;top:2px;width:24px;height:22px;background:#50555a;"></div>
<svg class="a" style="left:1499px;top:7px;" width="16" height="16" viewBox="0 0 16 16"><path d="M4 2Q1 4 3 6L12 14" stroke="#d8d8d8" stroke-width="2" fill="none"/><path d="M14 2L6 10" stroke="#d8d8d8" stroke-width="1.5"/><ellipse cx="4" cy="13" rx="3" ry="2" fill="#3a6ab8"/></svg>
<div class="a" style="left:1519px;top:2px;width:24px;height:22px;background:#cde6f7;border-radius:2px"></div>
<svg class="a" style="left:1525px;top:7px;" width="13" height="13" viewBox="0 0 13 13"><circle cx="6.5" cy="6.5" r="6" fill="#c01010"/><ellipse cx="6.5" cy="4" rx="4" ry="2.5" fill="#e04040"/></svg>
<svg class="a" style="left:1546px;top:7px;" width="16" height="16" viewBox="0 0 16 16"><rect x="0.5" y="0.5" width="12" height="12" rx="1.5" fill="#d0dcf0" stroke="#7090c0"/><rect x="3" y="1" width="7" height="4" fill="#eef"/><rect x="3.5" y="8" width="6" height="5" fill="#6a8ac0"/><path d="M8 15H9M11 15H12M14 15H15" stroke="#2050c0" stroke-width="1.5"/></svg>
<svg class="a" style="left:1569px;top:7px;" width="14" height="14" viewBox="0 0 14 14"><path d="M2 2L12 12M12 2L2 12" stroke="#e04048" stroke-width="3"/></svg>
<div class="a" style="left:1591px;top:4px;width:1px;height:18px;background:#2b2b2b;"></div>
<svg class="a" style="left:1600px;top:7px;" width="16" height="16" viewBox="0 0 16 16"><rect x="0.5" y="1.5" width="11" height="13" fill="#e8eef8" stroke="#c0a060"/><path d="M2 5H9M2 8H9M2 11H8" stroke="#4a78c8"/><path d="M10 10L15 15M15 10L10 15" stroke="#222" stroke-width="1.5"/></svg>
<svg class="a" style="left:1623px;top:7px;" width="16" height="16" viewBox="0 0 16 16"><rect x="2.5" y="0.5" width="13" height="14" fill="#e8eef8" stroke="#c0a060"/><rect x="12" y="2" width="3" height="11" fill="#7aa0d8"/><rect x="0.5" y="8.5" width="8" height="7" fill="#e8c040" stroke="#906010"/><path d="M2 8.5V6A2.5 2.5 0 0 1 7 6V8.5" fill="none" stroke="#906010"/></svg>
<div class="a" style="left:1645px;top:4px;width:1px;height:18px;background:#2b2b2b;"></div>
<svg class="a" style="left:1654px;top:7px;" width="14" height="14" viewBox="0 0 14 14"><path d="M7 1V13M1 7H13" stroke="#2a9a40" stroke-width="4.5"/><path d="M7 2V12M2 7H12" stroke="#c8e030" stroke-width="2.5"/></svg>
<svg class="a" style="left:1679px;top:8px;" width="11" height="5" viewBox="0 0 11 5"><rect x="0.5" y="0.5" width="10" height="3.5" fill="none" stroke="#e0e0e0"/></svg>
<svg class="a" style="left:1702px;top:8px;" width="11" height="11" viewBox="0 0 11 11"><rect x="0.5" y="0.5" width="10" height="10" fill="none" stroke="#e0e0e0"/><line x1="0.5" y1="2.5" x2="10.5" y2="2.5" stroke="#e0e0e0"/></svg>
<div class="a" style="left:5px;top:35px;width:1713px;height:674px;background:#4c4f53;"></div>
<div class="a" style="left:6px;top:36px;width:1711px;height:29px;background:linear-gradient(#494b4f,#414347);"></div>
<div class="a" style="left:6px;top:36px;width:68px;height:29px;background:#2a2a2a;"></div>
<div class="a t" style="left:9px;top:43px;font-size:15.5px;color:#ffffff;font-family:'Liberation Sans',sans-serif;letter-spacing:-0.45px;">Port 0</div>
<svg class="a" style="left:56px;top:46px;" width="11" height="11" viewBox="0 0 11 11"><path d="M1 1L10 10M10 1L1 10" stroke="#e8e8e8" stroke-width="1.1"/></svg>
<div class="a" style="left:6px;top:65px;width:1711px;height:643px;background:#686a6c;"></div>
<div class="a" style="left:7px;top:66px;width:1708px;height:641px;background:#2f2f2f;"></div>
<div class="a" style="left:1694px;top:66px;width:21px;height:641px;background:#f0f0f0;"></div>
<div class="a" style="left:1704px;top:665px;width:3px;height:20px;background:#8a8a8a;border-radius:2px"></div>
<div class="a t" style="left:7px;top:69px;font-size:15px;color:#c2c2c2;font-family:'Liberation Mono',monospace;line-height:20px">Xmag: 33.72, Ymag: -5.73, Zmag: -2.96
Xmag: 33.25, Ymag: -5.75, Zmag: -2.95
Xmag: 33.38, Ymag: -6.32, Zmag: -2.94
Xmag: 32.91, Ymag: -6.59, Zmag: -2.93
Xmag: 32.54, Ymag: -5.86, Zmag: -2.94
Xmag: 32.95, Ymag: -5.59, Zmag: -3.20
Xmag: 32.95, Ymag: -5.59, Zmag: -3.20
Xmag: 33.01, Ymag: -5.84, Zmag: -2.95
Xmag: 33.63, Ymag: -5.83, Zmag: -2.63
Xmag: 33.17, Ymag: -5.60, Zmag: -2.63
Xmag: 33.16, Ymag: -6.23, Zmag: -3.59
Xmag: 33.16, Ymag: -6.23, Zmag: -3.59
Xmag: 33.21, Ymag: -6.81, Zmag: -3.33
Xmag: 33.36, Ymag: -6.74, Zmag: -2.68
Xmag: 33.93, Ymag: -6.21, Zmag: -3.11
Xmag: 33.91, Ymag: -6.71, Zmag: -3.10
Xmag: 32.67, Ymag: -6.76, Zmag: -3.08
Xmag: 32.52, Ymag: -6.29, Zmag: -2.44
Xmag: 33.22, Ymag: -6.34, Zmag: -2.36
Xmag: 33.24, Ymag: -6.01, Zmag: -2.70
Xmag: 33.59, Ymag: -7.06, Zmag: -2.67
Xmag: 33.59, Ymag: -7.06, Zmag: -2.67
Xmag: 33.49, Ymag: -5.49, Zmag: -2.96
Xmag: 33.46, Ymag: -6.33, Zmag: -2.61
Xmag: 32.53, Ymag: -6.27, Zmag: -2.93
Xmag: 32.90, Ymag: -6.76, Zmag: -2.59
Xmag: 32.90, Ymag: -6.76, Zmag: -2.59
Xmag: 33.62, Ymag: -6.01, Zmag: -2.13
Xmag: 33.00, Ymag: -6.24, Zmag: -3.43
Xmag: 32.67, Ymag: -6.52, Zmag: -2.84
Xmag: 32.97, Ymag: -6.76, Zmag: -2.43</div>
</div>
<div class="a" style="left:0px;top:993px;width:1919px;height:28px;background:#50555a;"></div>
<div class="a" style="left:0px;top:1021px;width:1919px;height:2px;background:#2b2b2b;"></div>
<div class="a" style="left:1059px;top:994px;width:2px;height:22px;background:#e0e0e0;"></div>
<div class="a" style="left:1233px;top:994px;width:2px;height:22px;background:#e0e0e0;"></div>
<div class="a" style="left:1399px;top:994px;width:2px;height:22px;background:#e0e0e0;"></div>
<div class="a t" style="left:1067px;top:997px;font-size:15.5px;color:#e0e0e0;font-family:'Liberation Sans',sans-serif;letter-spacing:-0.45px;">Writable</div>
<div class="a t" style="left:1241px;top:997px;font-size:15.5px;color:#e0e0e0;font-family:'Liberation Sans',sans-serif;letter-spacing:-0.45px;">Smart Insert</div>
<div class="a t" style="left:1407px;top:997px;font-size:15.5px;color:#e0e0e0;font-family:'Liberation Sans',sans-serif;letter-spacing:-0.45px;">56 : 1 : 1232</div>
<svg class="a" style="left:1563px;top:998px;" width="3" height="16" viewBox="0 0 3 16"><circle cx="1.5" cy="2" r="1.2" fill="#ddd"/><circle cx="1.5" cy="7" r="1.2" fill="#ddd"/><circle cx="1.5" cy="12" r="1.2" fill="#ddd"/></svg>
<svg class="a" style="left:1895px;top:999px;" width="17" height="17" viewBox="0 0 17 17"><rect x="0.5" y="0.5" width="11" height="7" fill="#8ac88a" stroke="#5a8a5a"/><rect x="2.5" y="3.5" width="11" height="7" fill="#8ac88a" stroke="#5a8a5a"/><rect x="4.5" y="6.5" width="11" height="7" fill="#6ab86a" stroke="#4a7a4a"/><circle cx="12" cy="12" r="4.5" fill="#e03030"/><path d="M10 10L14 14M14 10L10 14" stroke="#fff"/></svg>
<svg class="a" style="left:1769px;top:243px;" width="48" height="48" viewBox="0 0 48 48"><defs><linearGradient id="bg5" x1="0" y1="0" x2="0" y2="1"><stop offset="0" stop-color="#5a86e6"/><stop offset="1" stop-color="#e0406a"/></linearGradient></defs><path d="M0 23.5A23 23 0 1 1 23.5 46.5H0Z" fill="#fff" stroke="#444" stroke-width="0.6"/><circle cx="23.5" cy="23.5" r="16" fill="#fff" stroke="url(#bg5)" stroke-width="2.6"/><text x="23.5" y="30.5" font-family="Liberation Sans" font-weight="bold" font-size="19" fill="#141a3a" text-anchor="middle">5</text><g fill="#9a9a9a"><rect x="2.5" y="35" width="1.8" height="1.8"/><rect x="6" y="35" width="1.8" height="1.8"/><rect x="2.5" y="38.5" width="1.8" height="1.8"/><rect x="6" y="38.5" width="1.8" height="1.8"/><rect x="2.5" y="42" width="1.8" height="1.8"/><rect x="6" y="42" width="1.8" height="1.8"/></g></svg>
</body></html>
